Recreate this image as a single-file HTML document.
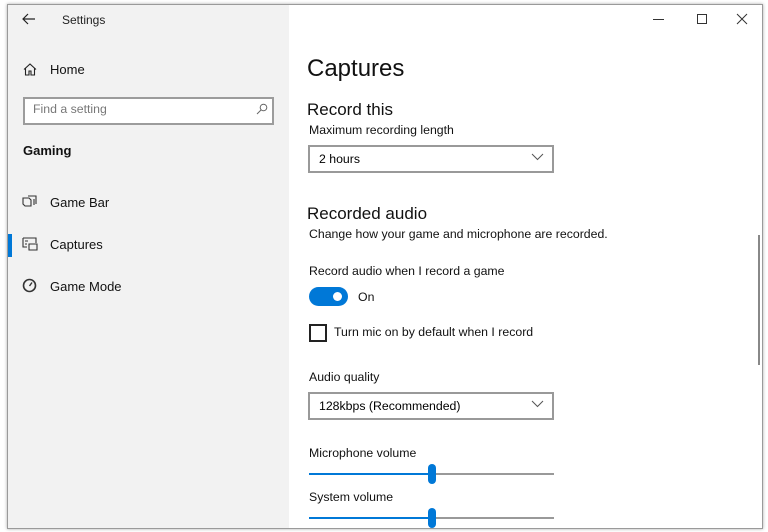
<!DOCTYPE html>
<html><head><style>
*{margin:0;padding:0;box-sizing:border-box}
body{width:768px;height:532px;background:#fff;font-family:"Liberation Sans",sans-serif;color:#000;position:relative;overflow:hidden}
.win{position:absolute;left:7px;top:4px;width:756px;height:525px;border:1px solid #9a9a9a;box-shadow:0 0 3px #aaa;background:#fff;overflow:hidden}
.side{position:absolute;left:0;top:0;width:281px;height:100%;background:#f2f2f2}
.a{position:absolute;white-space:nowrap}
.t{font-size:12px}
.n{font-size:13px;color:#111}
.lbl{font-size:12.3px;color:#111}
.dd{position:absolute;border:2px solid #999;background:#fff;font-size:12.3px;padding:5px 9px;height:28px;width:246px}
.chev{position:absolute;right:8px;top:6px}
.tr{position:absolute;height:2px;background:#999;width:245px}
.tr i{position:absolute;left:0;top:0;height:2px;width:122px;background:#0078d7}
.th{position:absolute;left:119px;top:-9px;width:8px;height:20px;border-radius:4px;background:#0078d7}
</style></head><body>
<div class="win">
<div class="side"></div>
<svg class="a" style="left:14px;top:8px" width="14" height="12" viewBox="0 0 14 12"><path d="M6 1L1 6l5 5M1 6h12" fill="none" stroke="#222" stroke-width="1.2"/></svg>
<div class="a t" style="left:54px;top:8px;color:#222">Settings</div>
<svg class="a" style="left:15px;top:58px" width="14" height="13" viewBox="0 0 14 13"><path d="M1 6.5L7 1l6 5.5M2.5 5v7h3.5V8h2v4h3.5V5" fill="none" stroke="#222" stroke-width="1.1"/></svg>
<div class="a n" style="left:42px;top:57px">Home</div>
<div class="a" style="left:15px;top:92px;width:251px;height:28px;border:2px solid #9c9c9c;background:#fff"></div>
<div class="a" style="left:25px;top:97px;font-size:12.3px;color:#777">Find a setting</div>
<svg class="a" style="left:248px;top:98px" width="12" height="12" viewBox="0 0 12 12"><circle cx="7.5" cy="4.5" r="3.3" fill="none" stroke="#666"/><path d="M5 7L1 11" stroke="#666"/></svg>
<div class="a" style="left:15px;top:138px;font-size:13px;font-weight:bold;color:#111">Gaming</div>
<svg class="a" style="left:14px;top:190px" width="16" height="13" viewBox="0 0 16 13"><path d="M1 3h6l2 2v6H3L1 9zM6 1h8v8M9 5v6M12 4v6" fill="none" stroke="#333" stroke-width="1.1"/></svg>
<div class="a n" style="left:42px;top:190px">Game Bar</div>
<div class="a" style="left:0;top:229px;width:4px;height:23px;background:#0078d7"></div>
<svg class="a" style="left:14px;top:232px" width="16" height="14" viewBox="0 0 16 14"><path d="M1 1h13v5M1 1v9h4M3 4h3M3 7h2M7 7h8v6H7z" fill="none" stroke="#333" stroke-width="1.1"/></svg>
<div class="a n" style="left:42px;top:232px">Captures</div>
<svg class="a" style="left:14px;top:273px" width="15" height="15" viewBox="0 0 15 15"><circle cx="7.5" cy="7.5" r="6" fill="none" stroke="#333" stroke-width="1.6"/><path d="M7.5 8L10 4.5" stroke="#333" stroke-width="1.4"/></svg>
<div class="a n" style="left:42px;top:274px">Game Mode</div>

<div class="a" style="left:645px;top:14px;width:11px;height:1px;background:#333"></div>
<div class="a" style="left:689px;top:9px;width:10px;height:10px;border:1px solid #333"></div>
<svg class="a" style="left:728px;top:8px" width="12" height="12" viewBox="0 0 12 12"><path d="M1 1l10 10M11 1L1 11" stroke="#333"/></svg>

<div class="a" style="left:299px;top:50px;font-size:24px;color:#111">Captures</div>
<div class="a" style="left:299px;top:95px;font-size:17px;color:#111">Record this</div>
<div class="a lbl" style="left:301px;top:118px">Maximum recording length</div>
<div class="dd a" style="left:300px;top:140px">2 hours<svg class="chev" width="13" height="8" viewBox="0 0 13 8"><path d="M1 1l5.5 5.5L12 1" fill="none" stroke="#555"/></svg></div>
<div class="a" style="left:299px;top:199px;font-size:17px;color:#111">Recorded audio</div>
<div class="a lbl" style="left:301px;top:222px">Change how your game and microphone are recorded.</div>
<div class="a lbl" style="left:301px;top:259px">Record audio when I record a game</div>
<div class="a" style="left:301px;top:282px;width:39px;height:19px;border-radius:10px;background:#0078d7"></div>
<div class="a" style="left:325px;top:287px;width:9px;height:9px;border-radius:50%;background:#fff"></div>
<div class="a lbl" style="left:350px;top:285px">On</div>
<div class="a" style="left:301px;top:319px;width:18px;height:18px;border:2px solid #222;background:#fff"></div>
<div class="a lbl" style="left:326px;top:320px">Turn mic on by default when I record</div>
<div class="a lbl" style="left:301px;top:365px">Audio quality</div>
<div class="dd a" style="left:300px;top:387px">128kbps (Recommended)<svg class="chev" width="13" height="8" viewBox="0 0 13 8"><path d="M1 1l5.5 5.5L12 1" fill="none" stroke="#555"/></svg></div>
<div class="a lbl" style="left:301px;top:441px">Microphone volume</div>
<div class="tr a" style="left:301px;top:468px"><i></i><div class="th"></div></div>
<div class="a lbl" style="left:301px;top:485px">System volume</div>
<div class="tr a" style="left:301px;top:512px"><i></i><div class="th"></div></div>
<div class="a" style="left:750px;top:230px;width:2px;height:130px;background:#888"></div>
</div>
</body></html>
